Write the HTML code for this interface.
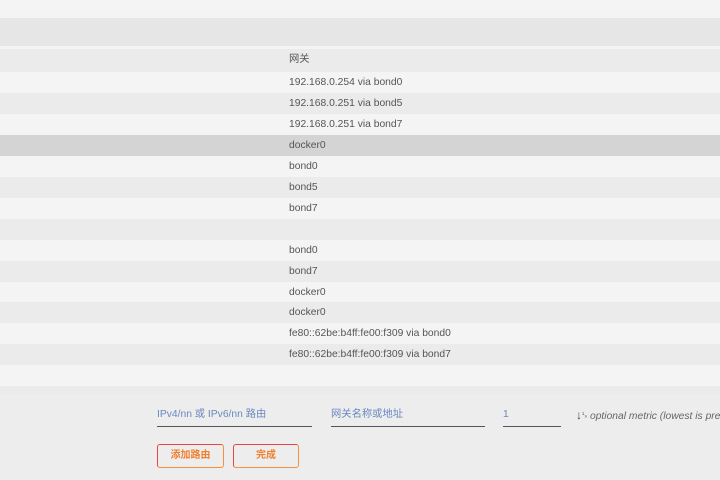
<html><head><style>
body{margin:0;width:720px;height:480px;background:#ededed;font-family:"Liberation Sans","Noto Sans CJK SC",sans-serif;font-size:10.3px;color:#555;overflow:hidden;position:relative}
.r{position:absolute;left:0;width:720px;height:21px;line-height:21px}
.r span{position:absolute;left:289px}
.l{background:#f4f4f4}.d{background:#ebebeb}.s{background:#d4d4d4}
.in{position:absolute;top:405px;height:21px;border-bottom:1px solid #555;color:#6a88c0;font-size:10.3px;line-height:20px}
.b{position:absolute;top:444px;height:24px;border:1.5px solid #e84545;border-radius:3px;color:#f08030;font-size:10px;font-weight:bold;line-height:22px;text-align:center;box-sizing:border-box;border-right-color:#f59040;border-bottom-color:#f59040}
</style></head><body>
<div class="r l" style="top:0;height:18px"></div>
<div class="r" style="top:18px;height:28px;background:#e6e6e6"></div>
<div class="r l" style="top:46px;height:3px"></div>
<div class="r d" style="top:49px;height:23px;line-height:22px"><span>网关</span></div>
<div class="r l" style="top:72px"><span>192.168.0.254 via bond0</span></div>
<div class="r d" style="top:93px"><span>192.168.0.251 via bond5</span></div>
<div class="r l" style="top:114px"><span>192.168.0.251 via bond7</span></div>
<div class="r s" style="top:135px"><span>docker0</span></div>
<div class="r l" style="top:156px"><span>bond0</span></div>
<div class="r d" style="top:177px"><span>bond5</span></div>
<div class="r l" style="top:198px"><span>bond7</span></div>
<div class="r d" style="top:219px"></div>
<div class="r l" style="top:240px"><span>bond0</span></div>
<div class="r d" style="top:261px"><span>bond7</span></div>
<div class="r l" style="top:282px"><span>docker0</span></div>
<div class="r d" style="top:302px"><span>docker0</span></div>
<div class="r l" style="top:323px"><span>fe80::62be:b4ff:fe00:f309 via bond0</span></div>
<div class="r d" style="top:344px"><span>fe80::62be:b4ff:fe00:f309 via bond7</span></div>
<div class="r l" style="top:365px"></div>
<div class="r d" style="top:386px;height:8px"></div>
<div class="in" style="left:157px;width:155px">IPv4/nn 或 IPv6/nn 路由</div>
<div class="in" style="left:331px;width:154px">网关名称或地址</div>
<div class="in" style="left:503px;width:58px">1</div>
<div style="position:absolute;left:576px;top:408px;font-size:10.3px;color:#666;font-style:italic;white-space:nowrap"><b style="font-style:normal;font-size:12px;color:#444">↓</b><span style="font-size:7px;font-style:normal;position:relative;top:-2px">¹₉</span> optional metric (lowest is preferred)</div>
<div class="b" style="left:157px;width:67px">添加路由</div>
<div class="b" style="left:233px;width:66px">完成</div>
</body></html>
